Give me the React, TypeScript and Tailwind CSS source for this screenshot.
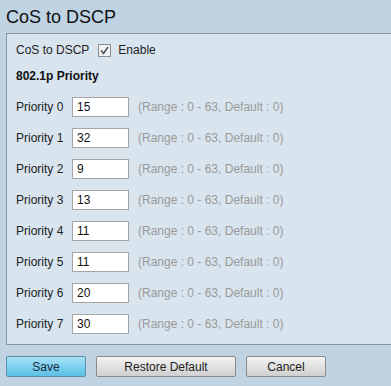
import React from "react";

const rows = [
  ["Priority 0", "15"],
  ["Priority 1", "32"],
  ["Priority 2", "9"],
  ["Priority 3", "13"],
  ["Priority 4", "11"],
  ["Priority 5", "11"],
  ["Priority 6", "20"],
  ["Priority 7", "30"],
];

export default function App() {
  return (
    <div
      className="w-[391px] h-[386px] overflow-hidden bg-[#bfd3e3] text-[12px] text-[#222]"
      style={{ fontFamily: '"Liberation Sans", Arial, sans-serif' }}
    >
      <div className="h-[33px] pl-[6px] flex items-center text-[18px] text-[#111] pt-[1px]">
        CoS to DSCP
      </div>
      <div className="ml-[6px] mr-[-4px] border border-[#8797a8] bg-[#d8e4ee] pl-[9px] pt-[5px] pb-[5px]">
        <div className="h-[22px] flex items-center">
          <span>CoS to DSCP</span>
          <span className="ml-[9px] w-[13px] h-[13px] border border-[#8f8f8f] bg-[#f2f2f2] flex items-center justify-center">
            <svg width="9" height="9" viewBox="0 0 9 9">
              <path d="M1 4.5 L3.5 7.5 L8 1" stroke="#4a5560" strokeWidth="1.6" fill="none" />
            </svg>
          </span>
          <span className="ml-[7px]">Enable</span>
        </div>
        <div className="h-[30px] flex items-center font-bold text-[#111]">802.1p Priority</div>
        {rows.map(([label, val]) => (
          <div key={label} className="h-[31px] flex items-center">
            <span className="w-[56px]">{label}</span>
            <div className="w-[57px] h-[20px] border border-[#a5a5a5] bg-white flex items-center pl-[4px] text-[#111]">
              {val}
            </div>
            <span className="ml-[9px] text-[#9a9a9a]">(Range : 0 - 63, Default : 0)</span>
          </div>
        ))}
      </div>
      <div className="flex items-center pl-[6px] pt-[11px] gap-[10px]">
        <button className="w-[80px] h-[21px] rounded-[2px] border border-[#5d8ea6] bg-gradient-to-b from-[#a9e2f6] via-[#7dd0ef] to-[#5cc0e6] text-[#1a2a44] text-[12px]">
          Save
        </button>
        <button className="w-[140px] h-[21px] rounded-[2px] border border-[#8a8a8a] bg-gradient-to-b from-[#f4f4f4] via-[#e2e2e2] to-[#cfcfcf] text-[#222] text-[12px]">
          Restore Default
        </button>
        <button className="w-[80px] h-[21px] rounded-[2px] border border-[#8a8a8a] bg-gradient-to-b from-[#f4f4f4] via-[#e2e2e2] to-[#cfcfcf] text-[#222] text-[12px]">
          Cancel
        </button>
      </div>
    </div>
  );
}
